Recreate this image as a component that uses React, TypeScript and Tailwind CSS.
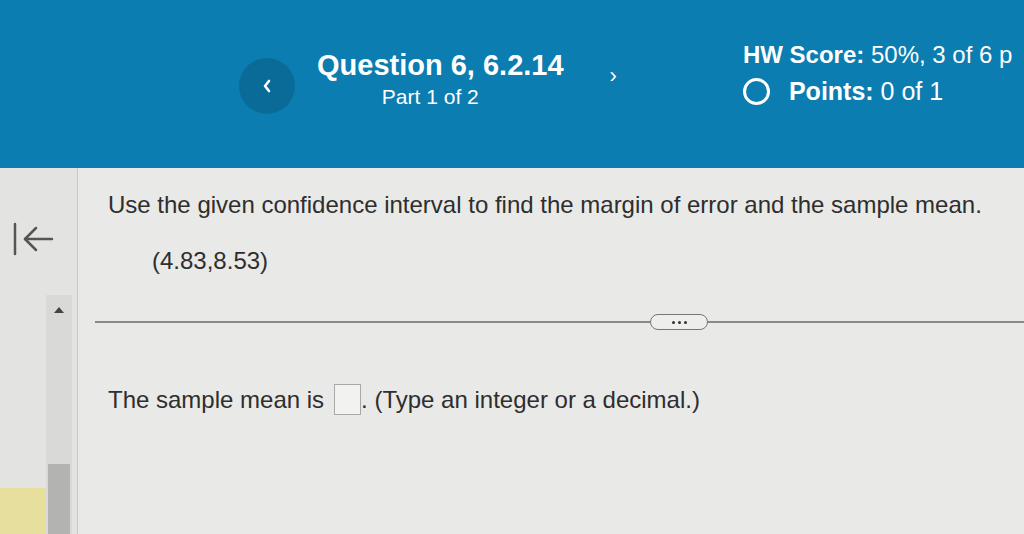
import React from 'react';

const App: React.FC = () => {
  return (
    <div className="w-[1024px] h-[534px] overflow-hidden bg-[#e9e9e7] flex flex-col" style={{ fontFamily: '"Liberation Sans", Arial, sans-serif' }}>
      <header className="h-[168px] shrink-0 bg-[#0b7db0] text-white flex items-center pb-[14px]">
        <div className="w-[239px] shrink-0" />
        <button className="w-[56px] h-[56px] rounded-full bg-[#0a6b98] flex items-center justify-center mt-[18px]">
          <svg width="12" height="16" viewBox="0 0 12 16" fill="none" stroke="white" strokeWidth="2.6" strokeLinecap="round" strokeLinejoin="round">
            <path d="M8 3L4 8l4 5" />
          </svg>
        </button>
        <div className="ml-[22px] flex flex-col items-center">
          <h1 className="text-[29px] font-bold leading-[34px] mt-[4px]">Question 6, 6.2.14</h1>
          <p className="text-[21px] leading-[26px] mt-[2px] mr-[20px]">Part 1 of 2</p>
        </div>
        <span className="ml-[46px] text-[22px] mt-[-4px]">&rsaquo;</span>
        <div className="ml-[126px] flex flex-col gap-[6px] whitespace-nowrap mt-[-8px]">
          <p className="text-[24px] leading-[30px]"><span className="font-bold">HW Score:</span> 50%, 3 of 6 p</p>
          <div className="flex items-center gap-[19px]">
            <span className="w-[27px] h-[27px] rounded-full border-[3px] border-white" />
            <p className="text-[25px] leading-[30px]"><span className="font-bold">Points:</span> 0 of 1</p>
          </div>
        </div>
      </header>
      <div className="flex flex-1 min-h-0">
        <aside className="w-[78px] shrink-0 bg-[#e3e3e1] border-r border-[#c8c8c6] flex flex-col">
          <div className="h-[127px] flex items-center pl-[12px] pt-[14px]">
            <svg width="42" height="36" viewBox="0 0 42 36" fill="none" stroke="#555" strokeWidth="2.5" strokeLinecap="round" strokeLinejoin="round">
              <path d="M3 3v30" />
              <path d="M40 18H13" />
              <path d="M24 7L13 18l11 11" />
            </svg>
          </div>
          <div className="flex flex-1">
            <div className="w-[46px] flex flex-col justify-end">
              <div className="h-[46px] bg-[#e6df9e]" />
            </div>
            <div className="w-[26px] bg-[#d9d9d7] flex flex-col">
              <div className="h-[36px] flex justify-center pt-[12px]">
                <span className="w-0 h-0 border-l-[5px] border-r-[5px] border-b-[6px] border-l-transparent border-r-transparent border-b-[#444]" />
              </div>
              <div className="flex-1" />
              <div className="h-[70px] bg-[#b3b3b1] mx-[2px]" />
            </div>
          </div>
        </aside>
        <main className="flex-1 min-w-0 text-[#2e2e2e] text-[24px] leading-[30px]">
          <p className="ml-[30px] mt-[22px] whitespace-nowrap">Use the given confidence interval to find the margin of error and the sample mean.</p>
          <p className="ml-[74px] mt-[26px]">(4.83,8.53)</p>
          <div className="ml-[17px] mt-[38px] relative h-[16px] flex items-center">
            <div className="w-full h-[1.5px] bg-[#8a8a88]" />
            <span className="absolute left-[555px] top-0 w-[58px] h-[16px] rounded-full border border-[#777] bg-[#eeeeec] flex items-center justify-center gap-[3px]">
              <span className="w-[3px] h-[3px] rounded-full bg-[#333]" />
              <span className="w-[3px] h-[3px] rounded-full bg-[#333]" />
              <span className="w-[3px] h-[3px] rounded-full bg-[#333]" />
            </span>
          </div>
          <div className="ml-[30px] mt-[54px] flex items-center whitespace-nowrap">
            <span>The sample mean is</span>
            <span className="ml-[10px] w-[27px] h-[31px] border border-[#a9a9a9] bg-[#f2f2f0]" />
            <span>. (Type an integer or a decimal.)</span>
          </div>
        </main>
      </div>
    </div>
  );
};

export default App;
